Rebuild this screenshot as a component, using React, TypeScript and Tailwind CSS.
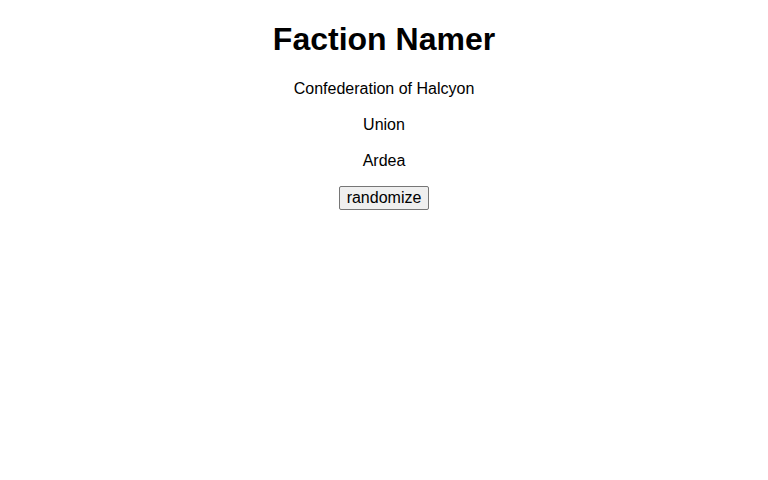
import React, { useState } from 'react';

const firsts = ['Confederation of', 'Republic of', 'Dominion of', 'League of'];
const places = ['Halcyon', 'Meridian', 'Vesper', 'Solace'];
const kinds = ['Union', 'Alliance', 'Pact', 'Compact'];
const names = ['Ardea', 'Corvus', 'Lyra', 'Aquila'];

const pick = (list: string[]) => list[Math.floor(Math.random() * list.length)];

const App = () => {
  const [faction, setFaction] = useState({
    title: 'Confederation of Halcyon',
    kind: 'Union',
    name: 'Ardea',
  });

  const randomize = () =>
    setFaction({
      title: `${pick(firsts)} ${pick(places)}`,
      kind: pick(kinds),
      name: pick(names),
    });

  return (
    <div className="min-h-screen bg-white text-black font-['Liberation_Sans',Arial,sans-serif]">
      <div className="flex flex-col items-center">
        <h1 className="mt-[21px] text-[32px] leading-[37px] font-bold">Faction Namer</h1>
        <div className="mt-[21px] flex flex-col items-center gap-4 text-base leading-5">
          <p>{faction.title}</p>
          <p>{faction.kind}</p>
          <p>{faction.name}</p>
          <button
            onClick={randomize}
            className="-mt-px px-[7px] py-px bg-[#efefef] border border-[#767676] rounded-[2px] text-base leading-5 hover:bg-[#e5e5e5]"
          >
            randomize
          </button>
        </div>
      </div>
    </div>
  );
};

export default App;
